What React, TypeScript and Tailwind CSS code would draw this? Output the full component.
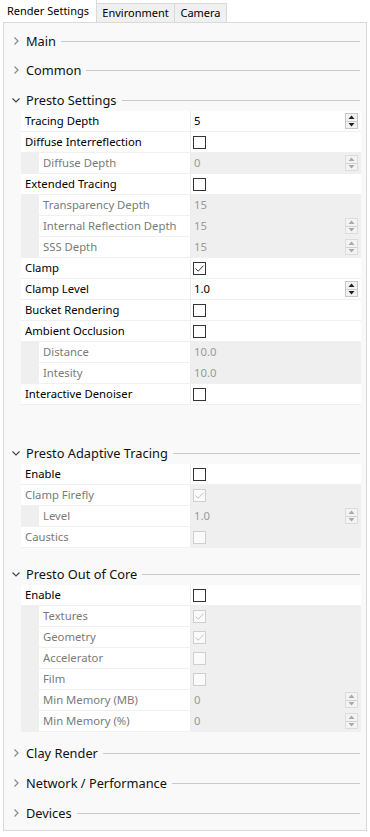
import React from 'react';

type Row = {
  label: string;
  kind: 'num' | 'check' | 'text';
  value?: string;
  checked?: boolean;
  sub?: boolean;
  disabled?: boolean;
  spin?: boolean;
};

const PRESTO: Row[] = [
  { label: 'Tracing Depth', kind: 'num', value: '5', spin: true },
  { label: 'Diffuse Interreflection', kind: 'check' },
  { label: 'Diffuse Depth', kind: 'num', value: '0', sub: true, disabled: true, spin: true },
  { label: 'Extended Tracing', kind: 'check' },
  { label: 'Transparency Depth', kind: 'num', value: '15', sub: true, disabled: true },
  { label: 'Internal Reflection Depth', kind: 'num', value: '15', sub: true, disabled: true, spin: true },
  { label: 'SSS Depth', kind: 'num', value: '15', sub: true, disabled: true, spin: true },
  { label: 'Clamp', kind: 'check', checked: true },
  { label: 'Clamp Level', kind: 'num', value: '1.0', spin: true },
  { label: 'Bucket Rendering', kind: 'check' },
  { label: 'Ambient Occlusion', kind: 'check' },
  { label: 'Distance', kind: 'num', value: '10.0', sub: true, disabled: true },
  { label: 'Intesity', kind: 'num', value: '10.0', sub: true, disabled: true },
  { label: 'Interactive Denoiser', kind: 'check' },
];

const ADAPTIVE: Row[] = [
  { label: 'Enable', kind: 'check' },
  { label: 'Clamp Firefly', kind: 'check', checked: true, disabled: true },
  { label: 'Level', kind: 'num', value: '1.0', sub: true, disabled: true, spin: true },
  { label: 'Caustics', kind: 'check', disabled: true },
];

const CORE: Row[] = [
  { label: 'Enable', kind: 'check' },
  { label: 'Textures', kind: 'check', checked: true, sub: true, disabled: true },
  { label: 'Geometry', kind: 'check', checked: true, sub: true, disabled: true },
  { label: 'Accelerator', kind: 'check', sub: true, disabled: true },
  { label: 'Film', kind: 'check', sub: true, disabled: true },
  { label: 'Min Memory (MB)', kind: 'num', value: '0', sub: true, disabled: true, spin: true },
  { label: 'Min Memory (%)', kind: 'num', value: '0', sub: true, disabled: true, spin: true },
];

const Chevron = ({ open }: { open: boolean }) => (
  <svg width="10" height="10" viewBox="0 0 10 10" className="shrink-0">
    {open ? (
      <path d="M1.5 3.5 L5 7 L8.5 3.5" fill="none" stroke="#444" strokeWidth="1.2" />
    ) : (
      <path d="M3.5 1.5 L7 5 L3.5 8.5" fill="none" stroke="#8a8a8a" strokeWidth="1.2" />
    )}
  </svg>
);

const Header = ({ title, open, className = '' }: { title: string; open: boolean; className?: string }) => (
  <div className={`flex h-[20px] items-center pl-[7px] pr-[6px] ${className}`}>
    <Chevron open={open} />
    <span className="ml-[5px] text-[12.8px] text-[#111] leading-none">{title}</span>
    <div className="ml-[5px] h-px flex-1 bg-[#c9c9c9]" />
  </div>
);

const CheckBox = ({ checked, disabled }: { checked?: boolean; disabled?: boolean }) => (
  <div
    className={`ml-[2px] flex h-[13px] w-[13px] items-center justify-center border ${
      disabled ? 'border-[#cfcfcf] bg-[#fafafa]' : 'border-[#333] bg-white'
    }`}
  >
    {checked && (
      <svg width="11" height="11" viewBox="0 0 11 11">
        <path
          d="M1.5 5.5 L4.2 8.2 L9.5 2.6"
          fill="none"
          stroke={disabled ? '#c4c4c4' : '#333'}
          strokeWidth="1"
        />
      </svg>
    )}
  </div>
);

const Spinner = ({ disabled }: { disabled?: boolean }) => {
  const c = disabled ? '#a8a8a8' : '#222';
  return (
    <div
      className={`mr-[3px] flex h-[16px] w-[13px] flex-col border ${
        disabled ? 'border-[#dcdcdc] bg-[#f3f3f3]' : 'border-[#c8c8c8] bg-[#f2f2f2]'
      }`}
    >
      <div className="flex flex-1 items-center justify-center border-b border-[#d0d0d0]">
        <svg width="7" height="4" viewBox="0 0 7 4">
          <path d="M0.5 4 L3.5 0.5 L6.5 4 Z" fill={c} />
        </svg>
      </div>
      <div className="flex flex-1 items-center justify-center">
        <svg width="7" height="4" viewBox="0 0 7 4">
          <path d="M0.5 0 L3.5 3.5 L6.5 0 Z" fill={c} />
        </svg>
      </div>
    </div>
  );
};

const PropRow = ({ row }: { row: Row }) => {
  const labelColor = row.disabled ? 'text-[#7a7a7a]' : 'text-black';
  const valueBg = row.disabled ? 'bg-[#efefef]' : 'bg-white';
  return (
    <div className="flex h-[21px] border-b border-[#f0f0f0] text-[11.3px] leading-none">
      {row.sub && <div className="w-[18px] shrink-0 bg-[#efefef]" />}
      <div
        className={`flex items-center bg-white pl-[4px] ${labelColor} ${
          row.sub ? 'w-[152px]' : 'w-[170px]'
        } shrink-0 border-r border-[#ececec]`}
      >
        {row.label}
      </div>
      <div className={`flex flex-1 items-center ${valueBg}`}>
        {row.kind === 'check' ? (
          <CheckBox checked={row.checked} disabled={row.disabled} />
        ) : (
          <>
            <span className={`flex-1 pl-[3px] ${row.disabled ? 'text-[#9a9a9a]' : 'text-black'}`}>
              {row.value}
            </span>
            {row.spin && <Spinner disabled={row.disabled} />}
          </>
        )}
      </div>
    </div>
  );
};

const Grid = ({ rows, className = '' }: { rows: Row[]; className?: string }) => (
  <div className={`ml-[17px] mr-[5px] ${className}`}>
    {rows.map((r) => (
      <PropRow key={r.label} row={r} />
    ))}
  </div>
);

export default function App() {
  return (
    <div className="h-[837px] w-[370px] bg-white font-['Noto_Sans',sans-serif] text-black">
      <div className="flex h-[22px] items-end text-[11px]">
        <div className="flex h-[22px] w-[97px] items-center justify-center border-r border-[#d9d9d9] bg-white">
          Render Settings
        </div>
        <div className="flex h-[19px] w-[78px] items-center justify-center border-r border-t border-[#d9d9d9] bg-[#f0f0f0]">
          Environment
        </div>
        <div className="flex h-[19px] w-[52px] items-center justify-center border-r border-t border-[#d9d9d9] bg-[#f0f0f0]">
          Camera
        </div>
      </div>
      <div className="mx-[3px] h-[809px] border border-[#d9d9d9] bg-[#f9f9f9]">
        <Header title="Main" open={false} className="mt-[8px]" />
        <Header title="Common" open={false} className="mt-[9px]" />
        <Header title="Presto Settings" open className="mt-[10px]" />
        <Grid rows={PRESTO} className="mt-[1px]" />
        <Header title="Presto Adaptive Tracing" open className="mt-[38px]" />
        <Grid rows={ADAPTIVE} className="mt-[1px]" />
        <Header title="Presto Out of Core" open className="mt-[16px]" />
        <Grid rows={CORE} className="mt-[1px]" />
        <Header title="Clay Render" open={false} className="mt-[11px]" />
        <Header title="Network / Performance" open={false} className="mt-[10px]" />
        <Header title="Devices" open={false} className="mt-[10px]" />
      </div>
    </div>
  );
}
